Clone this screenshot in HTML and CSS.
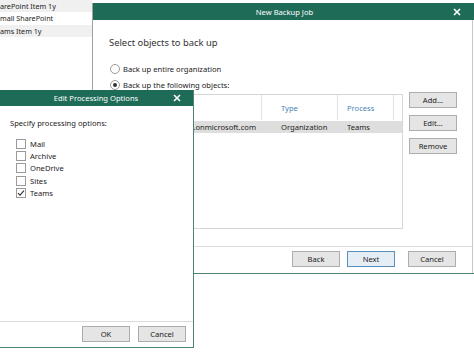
FILE: index.html
```html
<!DOCTYPE html>
<html lang="en">

<head>
    <meta charset="UTF-8" />
    <meta name="viewport" content="width=device-width, initial-scale=1.0" />
    <title>New Backup Job</title>
    <link rel="stylesheet" href="styles.css">
</head>

<body>
    <div class="desktop">
        <div class="bg-list">
            <div class="bg-row alt">arePoint Item 1y</div>
            <div class="bg-row">mall SharePoint</div>
            <div class="bg-row alt">ams Item 1y</div>
        </div>

        <div class="window main-window">
            <div class="titlebar">
                <span class="title">New Backup Job</span>
                <svg class="close" width="8" height="8" viewBox="0 0 8 8"><path d="M1 1 L7 7 M7 1 L1 7" stroke="#fff" stroke-width="1.6"/></svg>
            </div>
            <div class="main-body">
                <div class="heading">Select objects to back up</div>
                <div class="radios">
                    <label class="radio-row"><span class="radio"></span>Back up entire organization</label>
                    <label class="radio-row"><span class="radio checked"></span>Back up the following objects:</label>
                </div>
                <div class="objects">
                    <div class="list-box">
                        <div class="list-header">
                            <div class="col-name"></div>
                            <div class="col-type">Type</div>
                            <div class="col-process">Process</div>
                            <div class="col-rest"></div>
                        </div>
                        <div class="list-row selected">
                            <div class="col-name">.onmicrosoft.com</div>
                            <div class="col-type">Organization</div>
                            <div class="col-process">Teams</div>
                            <div class="col-rest"></div>
                        </div>
                    </div>
                    <div class="side-buttons">
                        <button class="btn">Add...</button>
                        <button class="btn">Edit...</button>
                        <button class="btn">Remove</button>
                    </div>
                </div>
            </div>
            <div class="footer main-footer">
                <button class="btn">Back</button>
                <button class="btn primary">Next</button>
                <button class="btn cancel">Cancel</button>
            </div>
        </div>

        <div class="window edit-window">
            <div class="titlebar small">
                <span class="title">Edit Processing Options</span>
                <svg class="close" width="8" height="8" viewBox="0 0 8 8"><path d="M1 1 L7 7 M7 1 L1 7" stroke="#fff" stroke-width="1.6"/></svg>
            </div>
            <div class="edit-body">
                <div class="prompt">Specify processing options:</div>
                <div class="checks">
                    <label class="check-row"><span class="checkbox"></span>Mail</label>
                    <label class="check-row"><span class="checkbox"></span>Archive</label>
                    <label class="check-row"><span class="checkbox"></span>OneDrive</label>
                    <label class="check-row"><span class="checkbox"></span>Sites</label>
                    <label class="check-row"><span class="checkbox">
                        <svg width="8" height="8" viewBox="0 0 8 8"><path d="M1 4.2 L3 6.2 L7 1.6" fill="none" stroke="#333" stroke-width="1.1"/></svg>
                    </span>Teams</label>
                </div>
            </div>
            <div class="footer edit-footer">
                <button class="btn">OK</button>
                <button class="btn">Cancel</button>
            </div>
        </div>
    </div>
</body>

</html>
```

FILE: styles.css
```css
* {
    box-sizing: border-box;
}

body {
    margin: 0;
    font-family: "Noto Sans", "Open Sans", sans-serif;
    font-size: 7.6px;
    color: #222;
    background-color: #fff;
}

.desktop {
    position: relative;
    width: 474px;
    height: 352px;
    overflow: hidden;
}

/* list of the app behind the dialogs */
.bg-list {
    width: 92px;
}

.bg-row {
    height: 12.3px;
    line-height: 12px;
    white-space: nowrap;
    overflow: hidden;
    font-size: 7.2px;
}

.bg-row.alt {
    background-color: #f0f0f0;
}

.window {
    position: absolute;
    background-color: #fff;
    display: flex;
    flex-direction: column;
}

.main-window {
    left: 92px;
    top: 3px;
    width: 384px;
    height: 271px;
    border-left: 1px solid #9aa5a2;
    border-bottom: 1px solid #4f8377;
}

.edit-window {
    left: -2px;
    top: 90px;
    width: 196px;
    height: 258px;
    border: 1px solid #4f8377;
    border-top: none;
}

.titlebar {
    height: 17px;
    background-color: #1e6b57;
    color: #fff;
    display: flex;
    align-items: center;
    justify-content: center;
    position: relative;
}

.titlebar.small {
    height: 16px;
}

.titlebar .close {
    position: absolute;
    right: 15px;
    top: 5px;
}

.edit-window .titlebar .close {
    right: 12px;
    top: 4px;
}

.main-body {
    flex: 1;
    padding: 16px 0 0 16px;
    border-right: 1px solid #c8c8c8;
    margin-right: 3px;
}

.heading {
    font-size: 9.4px;
    color: #333;
    line-height: 14px;
}

.radios {
    margin-top: 13px;
    display: flex;
    flex-direction: column;
    gap: 4px;
}

.radio-row {
    display: flex;
    align-items: center;
    height: 12px;
    gap: 3px;
    padding-left: 1px;
}

.radio {
    width: 10px;
    height: 10px;
    border: 1px solid #9a9a9a;
    border-radius: 50%;
    display: flex;
    align-items: center;
    justify-content: center;
}

.radio.checked::after {
    content: "";
    width: 4px;
    height: 4px;
    border-radius: 50%;
    background-color: #333;
}

.objects {
    display: flex;
    margin-top: 3px;
    gap: 6px;
}

.list-box {
    width: 294px;
    height: 135px;
    border: 1px solid #d6d6d6;
}

.list-header,
.list-row {
    display: flex;
}

.list-header {
    height: 25px;
    color: #4a86b8;
}

.list-header > div {
    height: 100%;
    display: flex;
    align-items: center;
    border-right: 1px solid #e2e2e2;
}

.list-row {
    height: 12px;
    align-items: center;
    margin-top: 1px;
}

.list-row.selected {
    background-color: #dedede;
}

.col-name {
    width: 152px;
    padding-right: 6px;
    white-space: nowrap;
    overflow: hidden;
    text-align: right;
}

.list-header > .col-name {
    justify-content: flex-end;
}

.col-type {
    width: 76px;
    padding-left: 19px;
}

.col-process {
    width: 56px;
    padding-left: 9px;
}

.col-rest {
    flex: 1;
}

.list-header > .col-rest {
    border-right: none;
}

.side-buttons {
    display: flex;
    flex-direction: column;
    gap: 7px;
    margin-top: -2px;
}

.btn {
    font-family: inherit;
    font-size: 7.6px;
    color: #222;
    width: 48px;
    height: 16px;
    padding: 0;
    background-color: #e5e5e5;
    border: 1px solid #adadad;
}

.btn.primary {
    background-color: #e6eef5;
    border-color: #5b8fbe;
}

.footer {
    display: flex;
    align-items: center;
}

.main-footer {
    height: 27px;
    border-top: 1px solid #dcdcdc;
    margin-right: 3px;
    border-right: 1px solid #c8c8c8;
    padding: 0 0 3px 199px;
    gap: 7px;
}

.main-footer .cancel {
    margin-left: 6px;
}

.edit-body {
    flex: 1;
    padding: 12px 0 0 11px;
}

.prompt {
    line-height: 10px;
}

.checks {
    margin-top: 10px;
    padding-left: 6px;
    display: flex;
    flex-direction: column;
}

.check-row {
    display: flex;
    align-items: center;
    height: 12.2px;
    gap: 4px;
}

.checkbox {
    width: 10px;
    height: 10px;
    border: 1px solid #9a9a9a;
    display: flex;
    align-items: center;
    justify-content: center;
}

.edit-footer {
    height: 26px;
    border-top: 1px solid #dcdcdc;
    justify-content: flex-end;
    padding: 0 7px 1px 0;
    gap: 8px;
}
```
